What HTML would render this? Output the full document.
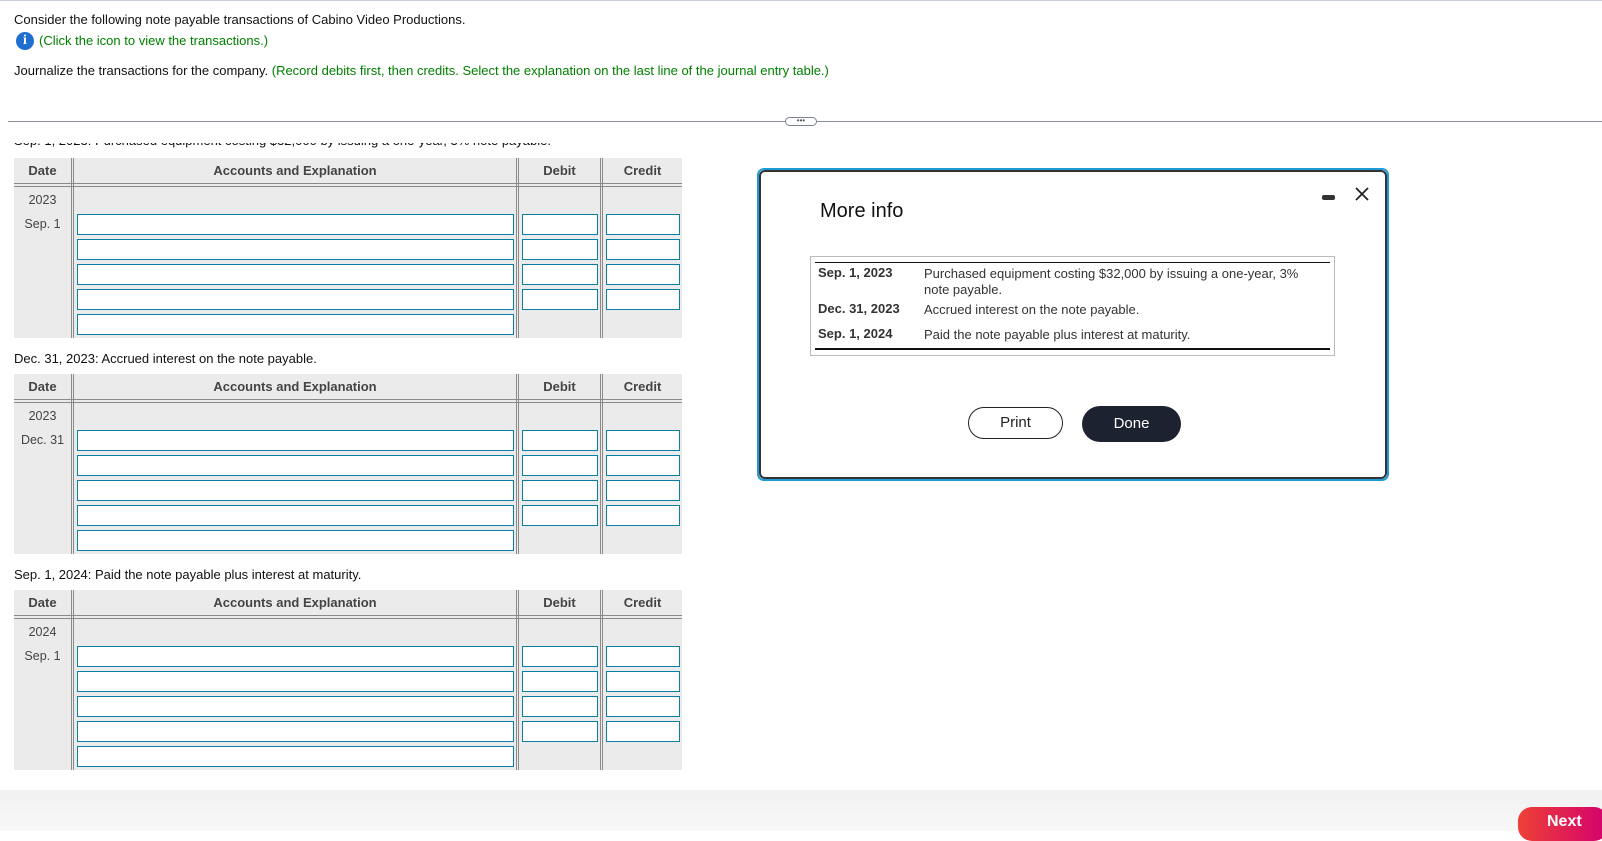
<!DOCTYPE html>
<html><head><meta charset="utf-8"><style>
*{margin:0;padding:0;box-sizing:border-box}
body{width:1602px;height:831px;overflow:hidden;background:#fff;font-family:"Liberation Sans",Arial,sans-serif;font-size:13px;color:#111;position:relative}
.a{position:absolute;white-space:nowrap}
.g{color:#008000}
.tbl{position:absolute;left:14px;width:668px;height:180px;background:#ebebeb}
.hl{position:absolute;left:0;width:668px;height:1px;background:#8a8a8a}
.vl{position:absolute;top:0;width:1px;height:180px;background:#8a8a8a}
.hd{position:absolute;top:5px;font-weight:bold;color:#444;font-size:13px;text-align:center}
.dt{position:absolute;left:0;width:57px;text-align:center;color:#444;font-size:12.5px}
.in{position:absolute;height:21px;background:#fff;border:1.5px solid #0a7fa3}
</style></head><body>
<div class="a" style="left:0;top:0;width:1602px;height:1px;background:#c8ced8"></div>
<div class="a" style="left:14px;top:12px">Consider the following note payable transactions of Cabino Video Productions.</div>
<div class="a" style="left:16px;top:32px;width:18px;height:18px;border-radius:50%;background:#1f6fd1;color:#fff;font-weight:bold;font-family:'Liberation Serif',serif;font-size:14px;text-align:center;line-height:18px">i</div>
<div class="a g" style="left:39px;top:33px">(Click the icon to view the transactions.)</div>
<div class="a" style="left:14px;top:63px">Journalize the transactions for the company. <span class="g">(Record debits first, then credits. Select the explanation on the last line of the journal entry table.)</span></div>
<div class="a" style="left:8px;top:121px;width:1594px;height:1px;background:#8a909a"></div>
<div class="a" style="left:785px;top:117px;width:32px;height:9px;border:1px solid #7a8290;border-radius:5px;background:#fff;font-size:8px;line-height:5px;text-align:center;color:#555">•••</div>
<div class="a" style="left:14px;top:143px;height:5px;overflow:hidden"><div style="margin-top:-10px">Sep. 1, 2023: Purchased equipment costing $32,000 by issuing a one-year, 3% note payable.</div></div>

<div class="tbl" style="top:158px">
<div class="hl" style="top:25px"></div><div class="hl" style="top:28px"></div>
<div class="vl" style="left:57px"></div><div class="vl" style="left:59px"></div>
<div class="vl" style="left:502px"></div><div class="vl" style="left:504px"></div>
<div class="vl" style="left:586px"></div><div class="vl" style="left:588px"></div>
<div class="hd" style="left:0;width:57px">Date</div><div class="hd" style="left:60px;width:442px">Accounts and Explanation</div><div class="hd" style="left:505px;width:81px">Debit</div><div class="hd" style="left:589px;width:79px">Credit</div>
<div class="dt" style="top:35px">2023</div><div class="dt" style="top:59px">Sep. 1</div>
<div class="in" style="left:63px;top:56px;width:437px"></div><div class="in" style="left:63px;top:81px;width:437px"></div><div class="in" style="left:63px;top:106px;width:437px"></div><div class="in" style="left:63px;top:131px;width:437px"></div><div class="in" style="left:63px;top:156px;width:437px"></div>
<div class="in" style="left:508px;top:56px;width:76px"></div><div class="in" style="left:508px;top:81px;width:76px"></div><div class="in" style="left:508px;top:106px;width:76px"></div><div class="in" style="left:508px;top:131px;width:76px"></div>
<div class="in" style="left:592px;top:56px;width:74px"></div><div class="in" style="left:592px;top:81px;width:74px"></div><div class="in" style="left:592px;top:106px;width:74px"></div><div class="in" style="left:592px;top:131px;width:74px"></div>
</div>
<div class="a" style="left:14px;top:351px">Dec. 31, 2023: Accrued interest on the note payable.</div>
<div class="tbl" style="top:374px">
<div class="hl" style="top:25px"></div><div class="hl" style="top:28px"></div>
<div class="vl" style="left:57px"></div><div class="vl" style="left:59px"></div>
<div class="vl" style="left:502px"></div><div class="vl" style="left:504px"></div>
<div class="vl" style="left:586px"></div><div class="vl" style="left:588px"></div>
<div class="hd" style="left:0;width:57px">Date</div><div class="hd" style="left:60px;width:442px">Accounts and Explanation</div><div class="hd" style="left:505px;width:81px">Debit</div><div class="hd" style="left:589px;width:79px">Credit</div>
<div class="dt" style="top:35px">2023</div><div class="dt" style="top:59px">Dec. 31</div>
<div class="in" style="left:63px;top:56px;width:437px"></div><div class="in" style="left:63px;top:81px;width:437px"></div><div class="in" style="left:63px;top:106px;width:437px"></div><div class="in" style="left:63px;top:131px;width:437px"></div><div class="in" style="left:63px;top:156px;width:437px"></div>
<div class="in" style="left:508px;top:56px;width:76px"></div><div class="in" style="left:508px;top:81px;width:76px"></div><div class="in" style="left:508px;top:106px;width:76px"></div><div class="in" style="left:508px;top:131px;width:76px"></div>
<div class="in" style="left:592px;top:56px;width:74px"></div><div class="in" style="left:592px;top:81px;width:74px"></div><div class="in" style="left:592px;top:106px;width:74px"></div><div class="in" style="left:592px;top:131px;width:74px"></div>
</div>
<div class="a" style="left:14px;top:567px">Sep. 1, 2024: Paid the note payable plus interest at maturity.</div>
<div class="tbl" style="top:590px">
<div class="hl" style="top:25px"></div><div class="hl" style="top:28px"></div>
<div class="vl" style="left:57px"></div><div class="vl" style="left:59px"></div>
<div class="vl" style="left:502px"></div><div class="vl" style="left:504px"></div>
<div class="vl" style="left:586px"></div><div class="vl" style="left:588px"></div>
<div class="hd" style="left:0;width:57px">Date</div><div class="hd" style="left:60px;width:442px">Accounts and Explanation</div><div class="hd" style="left:505px;width:81px">Debit</div><div class="hd" style="left:589px;width:79px">Credit</div>
<div class="dt" style="top:35px">2024</div><div class="dt" style="top:59px">Sep. 1</div>
<div class="in" style="left:63px;top:56px;width:437px"></div><div class="in" style="left:63px;top:81px;width:437px"></div><div class="in" style="left:63px;top:106px;width:437px"></div><div class="in" style="left:63px;top:131px;width:437px"></div><div class="in" style="left:63px;top:156px;width:437px"></div>
<div class="in" style="left:508px;top:56px;width:76px"></div><div class="in" style="left:508px;top:81px;width:76px"></div><div class="in" style="left:508px;top:106px;width:76px"></div><div class="in" style="left:508px;top:131px;width:76px"></div>
<div class="in" style="left:592px;top:56px;width:74px"></div><div class="in" style="left:592px;top:81px;width:74px"></div><div class="in" style="left:592px;top:106px;width:74px"></div><div class="in" style="left:592px;top:131px;width:74px"></div>
</div>

<div class="a" style="left:0;top:790px;width:1602px;height:41px;background:linear-gradient(#f1f1f1,#f8f8f8)"></div>
<div class="a" style="left:1518px;top:807px;width:90px;height:34px;border-radius:14px;background:linear-gradient(90deg,#ee4136,#d4006e);color:#fff;font-weight:bold;font-size:16px;padding:6px 0 0 29px">Next</div>

<div class="a" style="left:757px;top:168px;width:632px;height:313px;border:2px solid #1e9ad6;border-radius:7px"></div>
<div class="a" style="left:759px;top:170px;width:628px;height:309px;border:2px solid #333;border-radius:6px;background:#fff"></div>
<div class="a" style="left:820px;top:200px;font-size:20px;color:#111">More info</div>
<div class="a" style="left:1322px;top:195px;width:13px;height:5px;border-radius:2px;background:#333"></div>
<svg class="a" style="left:1354px;top:186px" width="16" height="16" viewBox="0 0 16 16"><path d="M2 2L14 14M14 2L2 14" stroke="#222" stroke-width="1.8"/></svg>
<div class="a" style="left:810px;top:256px;width:525px;height:100px;border:1px solid #bbb"></div>
<div class="a" style="left:815px;top:262px;width:515px;height:1px;background:#111"></div>
<div class="a" style="left:815px;top:348px;width:515px;height:2px;background:#111"></div>
<div class="a" style="left:818px;top:265px;font-weight:bold;color:#333;font-size:13px">Sep. 1, 2023</div>
<div class="a" style="left:924px;top:266px;color:#333">Purchased equipment costing $32,000 by issuing a one-year, 3%</div>
<div class="a" style="left:924px;top:282px;color:#333">note payable.</div>
<div class="a" style="left:818px;top:301px;font-weight:bold;color:#333;font-size:13px">Dec. 31, 2023</div>
<div class="a" style="left:924px;top:302px;color:#333">Accrued interest on the note payable.</div>
<div class="a" style="left:818px;top:326px;font-weight:bold;color:#333;font-size:13px">Sep. 1, 2024</div>
<div class="a" style="left:924px;top:327px;color:#333">Paid the note payable plus interest at maturity.</div>
<div class="a" style="left:968px;top:407px;width:95px;height:32px;border:1.5px solid #222;border-radius:16px;text-align:center;line-height:29px;font-size:15px;color:#222">Print</div>
<div class="a" style="left:1082px;top:406px;width:99px;height:36px;border-radius:18px;background:#1c2230;text-align:center;line-height:36px;font-size:15px;color:#fff">Done</div>
</body></html>
